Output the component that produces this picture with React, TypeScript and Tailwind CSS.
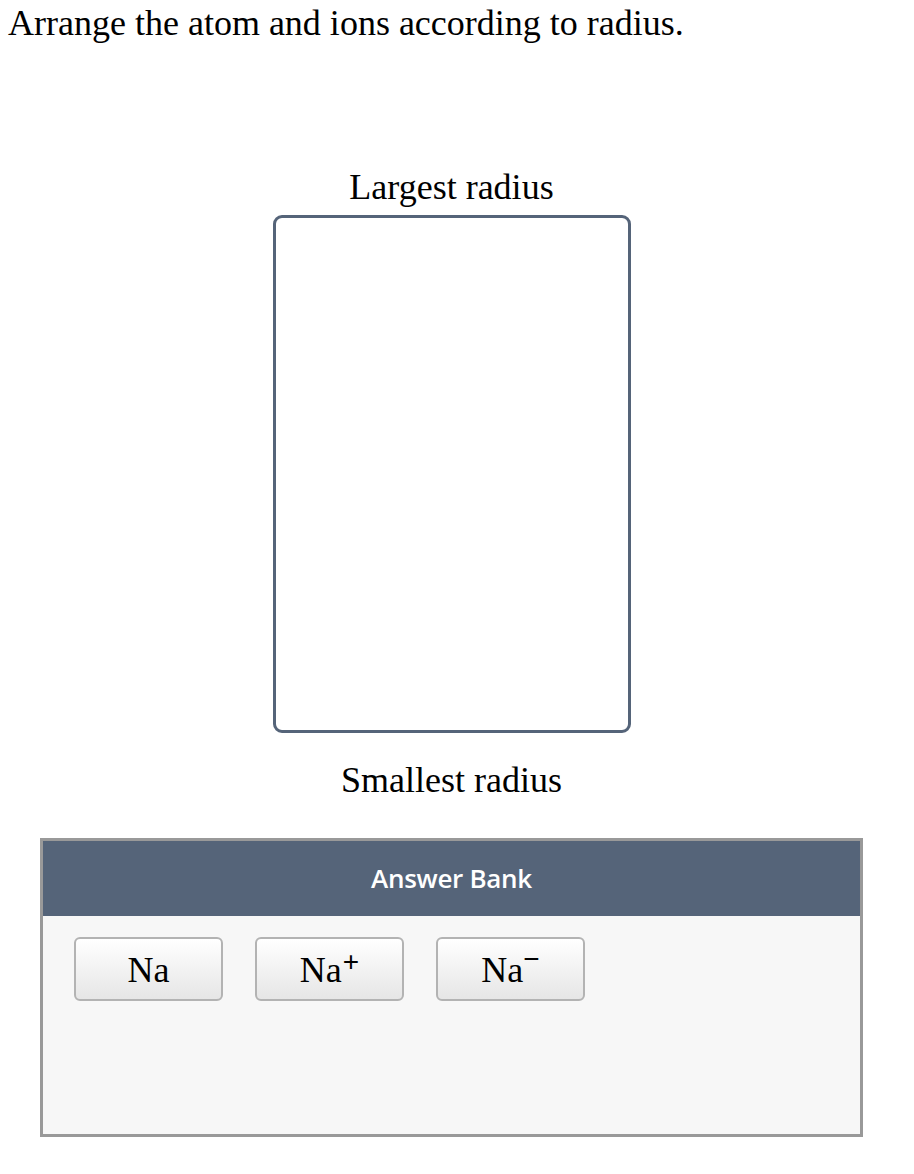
import { FC } from "react";

const serif = "font-['Liberation_Serif','Times_New_Roman',serif]";

interface ChipProps {
  charge?: "+" | "−";
}

// draggable answer tile
const Chip: FC<ChipProps> = ({ charge }) => (
  <div
    className={`w-[149px] h-[64px] rounded-[6px] border-2 border-[#b3b3b3] bg-gradient-to-b from-white to-[#e6e6e6] flex items-center justify-center text-[36px] leading-none text-black ${serif}`}
  >
    <span className="relative top-[1px]">
      Na
      {charge === "+" && (
        <span className="inline-block align-top ml-[1px] -mt-[4px] text-[28px] leading-none font-['Liberation_Sans',sans-serif]">
          +
        </span>
      )}
      {charge === "−" && (
        <span className="inline-block align-top -mt-[7px] text-[28px] leading-none font-['Liberation_Sans',sans-serif]">
          −
        </span>
      )}
    </span>
  </div>
);

export default function App() {
  return (
    <div className="w-[914px] min-h-[1174px] bg-white text-black">
      <h1
        className={`pl-[8px] pt-[3px] text-[36px] leading-[41px] font-normal ${serif}`}
      >
        Arrange the atom and ions according to radius.
      </h1>

      <div className="ml-[40px] w-[823px] flex flex-col items-center">
        <p className={`mt-[123px] text-[36px] leading-[41px] ${serif}`}>
          Largest radius
        </p>
        <div className="mt-[7px] w-[358px] h-[518px] rounded-[9px] border-[3px] border-[#556479]" />
        <p className={`mt-[27px] text-[36px] leading-[41px] ${serif}`}>
          Smallest radius
        </p>

        <div className="mt-[37px] w-full h-[299px] border-[3px] border-[#999999] bg-[#f7f7f7] flex flex-col">
          <div className="h-[75px] bg-[#556479] flex items-center justify-center text-white text-[26px] font-semibold tracking-[-0.3px] font-['Open_Sans',sans-serif]">
            Answer Bank
          </div>
          <div className="flex gap-[32px] pl-[31px] pt-[21px]">
            <Chip />
            <Chip charge="+" />
            <Chip charge="−" />
          </div>
        </div>
      </div>
    </div>
  );
}
